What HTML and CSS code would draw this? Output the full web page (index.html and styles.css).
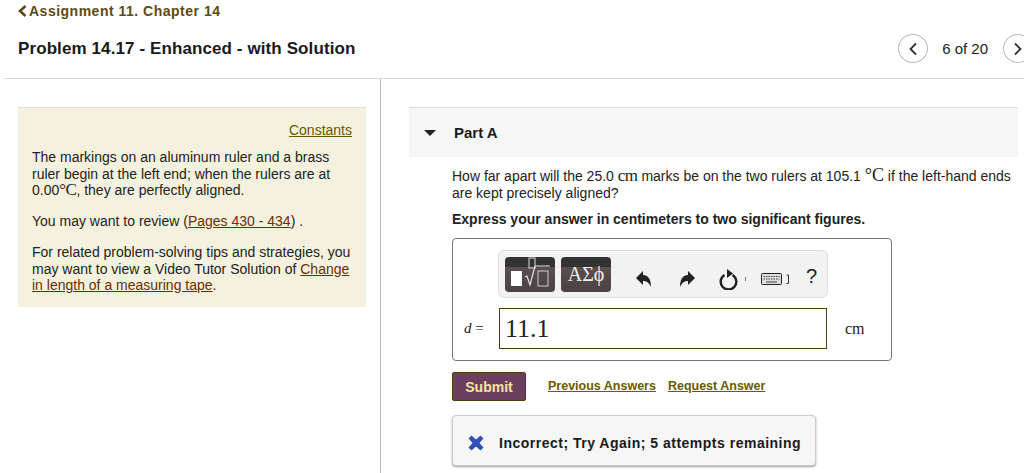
FILE: index.html
```html
<!DOCTYPE html>
<html lang="en">
  <head>
    <meta charset="UTF-8" />
    <meta name="viewport" content="width=device-width, initial-scale=1.0" />
    <title>Problem 14.17 - Enhanced - with Solution</title>
    <link rel="stylesheet" href="styles.css">
  </head>
  <body>
    <header class="page-header">
      <a class="breadcrumb" href="#">
        <svg class="breadcrumb-arrow" width="9" height="12" viewBox="0 0 9 12"><path d="M7.500 1 2 6l5.500 5" fill="none" stroke="#5f4a14" stroke-width="2.600"/></svg>
        Assignment 11. Chapter 14
      </a>
      <div class="title-row">
        <h1>Problem 14.17 - Enhanced - with Solution</h1>
        <nav class="pager">
          <span class="pager-btn">
            <svg width="10" height="14" viewBox="0 0 10 14"><path d="M8 1.500 2.500 7 8 12.500" fill="none" stroke="#333" stroke-width="1.800"/></svg>
          </span>
          <span class="pager-count">6 of 20</span>
          <span class="pager-btn">
            <svg width="10" height="14" viewBox="0 0 10 14"><path d="M2 1.500 7.500 7 2 12.500" fill="none" stroke="#333" stroke-width="1.800"/></svg>
          </span>
        </nav>
      </div>
    </header>

    <div class="columns">
      <aside class="left-col">
        <div class="intro">
          <a class="constants" href="#">Constants</a>
          <p>The markings on an aluminum ruler and a brass ruler begin at the left end; when the rulers are at 0.00<span class="math">°C</span>, they are perfectly aligned.</p>
          <p>You may want to review (<a href="#">Pages 430 - 434</a>) .</p>
          <p>For related problem-solving tips and strategies, you may want to view a Video Tutor Solution of <a href="#">Change in length of a measuring tape</a>.</p>
        </div>
      </aside>

      <main class="right-col">
        <div class="part-head">
          <span class="part-arrow"></span>
          <span>Part A</span>
        </div>
        <div class="part-body">
          <p class="question">How far apart will the 25.0 <span class="math">cm</span> marks be on the two rulers at 105.1 <span class="math deg">°C</span> if the left-hand ends are kept precisely aligned?</p>
          <p class="express">Express your answer in centimeters to two significant figures.</p>

          <div class="answer-box">
            <div class="toolbar">
              <span class="tool-btn tool-templates">
                <svg width="46" height="34" viewBox="0 0 46 34">
                  <rect x="4" y="14" width="11" height="15" fill="#fff"/>
                  <rect x="22" y="1" width="6" height="10" fill="none" stroke="#ddd"/>
                  <path d="M18 20l2-1 3 9 5-19h15" fill="none" stroke="#e4e4e4" stroke-width="1.200"/>
                  <rect x="31" y="14" width="10" height="15" fill="none" stroke="#ccc"/>
                </svg>
              </span>
              <span class="tool-btn tool-symbols">ΑΣϕ</span>
              <span class="tool-icons">
                <svg class="tool-undo" width="16" height="17" viewBox="0 0 16 17"><path d="M0 7 7 0v4c5 0 8 4 8 12-2-4-4-6-8-6v4z" fill="#222"/></svg>
                <svg class="tool-redo" width="16" height="17" viewBox="0 0 16 17"><path d="M16 7 9 0v4C4 4 1 8 1 16c2-4 4-6 8-6v4z" fill="#222"/></svg>
                <svg class="tool-reset" width="19" height="21" viewBox="0 0 19 21"><path d="M5.500 6a7.800 7.800 0 1 0 8 0" fill="none" stroke="#222" stroke-width="2.400"/><path d="M8 0v9l6-4.500z" fill="#222"/></svg>
                <span class="tool-tick"></span>
                <svg class="tool-keyboard" width="29" height="14" viewBox="0 0 29 14">
                  <rect x="0.500" y="1.500" width="20" height="11" rx="1" fill="#ddd" stroke="#222"/>
                  <path d="M2.500 4.500h16M2.500 7h16" stroke="#444" stroke-dasharray="1.500 1"/>
                  <path d="M5 10h11" stroke="#444"/>
                  <path d="M25.500 3h2v8.500h-2" fill="none" stroke="#333"/>
                </svg>
                <span class="help">?</span>
              </span>
            </div>
            <div class="answer-row">
              <span class="answer-label"><i>d</i> =</span>
              <div class="answer-input">11.1</div>
              <span class="answer-unit">cm</span>
            </div>
          </div>

          <div class="actions">
            <button class="submit-btn">Submit</button>
            <a href="#">Previous Answers</a>
            <a href="#">Request Answer</a>
          </div>

          <div class="feedback">
            <svg width="16" height="16" viewBox="0 0 16 16"><path d="M3.500 0.500 8 4.500l4.500-4 3 3L11.500 8l4 4.500-3 3-4.500-4-4.500 4-3-3 4-4.500-4-4.500z" fill="#3350b8"/></svg>
            <span>Incorrect; Try Again; 5 attempts remaining</span>
          </div>
        </div>
      </main>
    </div>
  </body>
</html>
```

FILE: styles.css
```css
html, body {
  height: 100%;
}
body {
  margin: 0;
  display: flex;
  flex-direction: column;
  overflow: hidden;
  font-family: 'Liberation Sans', Arial, sans-serif;
  font-size: 14px;
  color: #222;
  background: #fff;
}
a {
  color: #6b2d00;
}
p {
  margin: 0;
}
.math {
  font-family: 'Liberation Serif', serif;
  font-size: 17px;
  letter-spacing: -0.5px;
}

/* header */
.page-header {
  flex: none;
  height: 78px;
  margin-left: 4px;
  padding-left: 14px;
  border-bottom: 1px solid #d8d8d8;
}
.breadcrumb {
  display: flex;
  align-items: center;
  gap: 2px;
  height: 22px;
  font-size: 14px;
  font-weight: bold;
  letter-spacing: 0.5px;
  color: #5f4a14;
  text-decoration: none;
}
.title-row {
  display: flex;
  justify-content: space-between;
  align-items: center;
  height: 53px;
}
h1 {
  margin: 0;
  font-size: 17px;
  font-weight: bold;
  letter-spacing: 0.1px;
  color: #1a1a1a;
}
.pager {
  display: flex;
  align-items: center;
  gap: 14px;
  margin-right: -9px;
  font-size: 15px;
}
.pager-count {
  margin-right: 1px;
}
.pager-btn {
  display: flex;
  justify-content: center;
  align-items: center;
  width: 28px;
  height: 27px;
  border: 1px solid #bbb;
  border-radius: 50%;
}

/* columns */
.columns {
  flex: 1;
  display: flex;
  min-height: 0;
}
.left-col {
  flex: none;
  box-sizing: border-box;
  width: 381px;
  padding: 28px 14px 0 18px;
  border-right: 1px solid #bbb;
}
.intro {
  display: flex;
  flex-direction: column;
  gap: 14.500px;
  height: 200px;
  box-sizing: border-box;
  padding: 14px 14px 0 14px;
  line-height: 16.500px;
  background: #f4f2df;
  border-top: 1px solid #ddd;
}
.constants {
  align-self: flex-end;
  margin-bottom: -4px;
  color: #665a00;
}
.right-col {
  flex: 1;
  padding: 28px 6px 0 28px;
}
.part-head {
  display: flex;
  align-items: center;
  gap: 18px;
  height: 49px;
  padding-left: 15px;
  font-size: 15px;
  font-weight: bold;
  color: #1a1a1a;
  background: #f6f6f6;
  border-top: 1px solid #ddd;
}
.part-arrow {
  width: 0;
  height: 0;
  border-left: 6px solid transparent;
  border-right: 6px solid transparent;
  border-top: 6px solid #222;
}
.part-body {
  padding: 10px 0 0 43px;
}
.question {
  line-height: 17px;
}
.question .deg {
  font-size: 18px;
  letter-spacing: 0;
}
.express {
  margin-top: 9px;
  font-weight: bold;
}

/* answer */
.answer-box {
  box-sizing: border-box;
  width: 440px;
  height: 123px;
  margin-top: 11px;
  padding: 11px 0 0 45px;
  border: 1px solid #777;
  border-radius: 4px;
}
.toolbar {
  display: flex;
  align-items: center;
  gap: 6px;
  box-sizing: border-box;
  width: 330px;
  height: 48px;
  padding-left: 6px;
  background: #f2f2f2;
  border: 1px solid #ddd;
  border-radius: 6px;
}
.tool-btn {
  display: flex;
  justify-content: center;
  align-items: center;
  width: 50px;
  height: 35px;
  border-radius: 4px;
  color: #eee;
  background: linear-gradient(#333 0 28%, #5a4e50 28%, #4a4244);
}
.tool-symbols {
  font-family: 'Liberation Serif', serif;
  font-size: 20px;
}
.tool-icons {
  display: flex;
  align-items: center;
  margin: 10px 0 0 19px;
}
.tool-redo {
  margin-left: 27px;
}
.tool-reset {
  margin-left: 24px;
}
.tool-tick {
  width: 1px;
  height: 4px;
  margin-left: 7px;
  background: #777;
}
.tool-keyboard {
  margin-left: 15px;
}
.help {
  margin-left: 16px;
  margin-top: -6px;
  font-size: 20px;
  line-height: 20px;
}
.answer-row {
  display: flex;
  align-items: center;
  margin: 10px 0 0 -34px;
}
.answer-label {
  width: 35px;
  font-family: 'Liberation Serif', serif;
  font-size: 15px;
}
.answer-input {
  box-sizing: border-box;
  width: 328px;
  height: 41px;
  padding-left: 5px;
  font-family: 'Liberation Serif', serif;
  font-size: 26px;
  line-height: 39px;
  background: #fff;
  border: 1px solid #4f3f0a;
}
.answer-unit {
  margin-left: 18px;
  font-family: 'Liberation Serif', serif;
  font-size: 16px;
}

/* actions */
.actions {
  display: flex;
  align-items: center;
  gap: 12px;
  margin-top: 11px;
}
.actions a {
  margin-bottom: 2px;
  font-size: 12.500px;
  font-weight: bold;
  color: #6b5a00;
}
.submit-btn {
  width: 74px;
  height: 29px;
  margin-right: 10px;
  font-family: inherit;
  font-size: 14px;
  font-weight: bold;
  color: #f5e49c;
  background: #6d3f5f;
  border: 1px solid #4f3f0a;
  border-radius: 2px;
}
.feedback {
  display: flex;
  align-items: center;
  gap: 15px;
  box-sizing: border-box;
  width: 364px;
  height: 51px;
  margin-top: 14px;
  padding: 4px 0 0 15px;
  font-size: 14px;
  font-weight: bold;
  letter-spacing: 0.5px;
  color: #1a1a1a;
  background: #f6f6f6;
  border: 1px solid #ccc;
  border-radius: 4px;
  box-shadow: 0 1px 2px rgba(0, 0, 0, 0.4);
}
```
